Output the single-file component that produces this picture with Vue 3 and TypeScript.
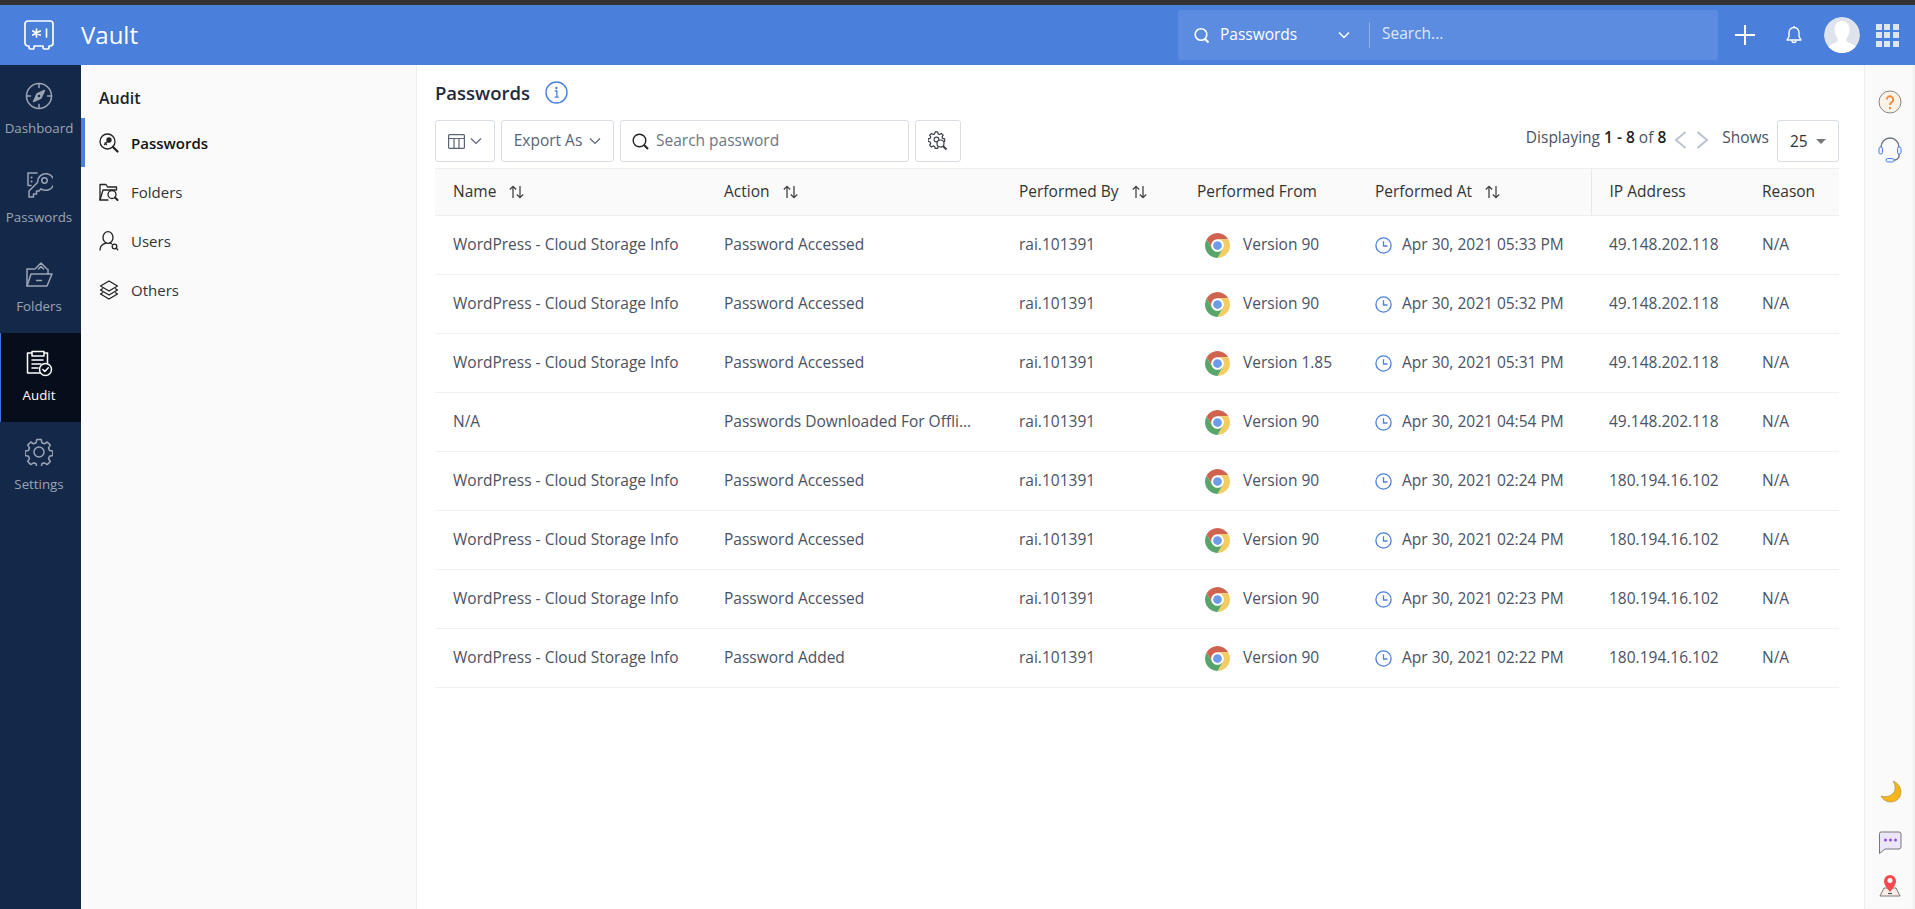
<script setup lang="ts">
interface Row { name: string; action: string; by: string; version: string; at: string; ip: string; reason: string }
const nav = ['Dashboard', 'Passwords', 'Folders', 'Audit', 'Settings']
const sub = ['Passwords', 'Folders', 'Users', 'Others']
const wp = 'WordPress - Cloud Storage Info'
const pa = 'Password Accessed'
const ip1 = '49.148.202.118'
const ip2 = '180.194.16.102'
const gear = 'M11.800 1.500h4.400l.7 3.300 2.500 1 2.800-1.800 3.100 3.100-1.800 2.800 1 2.500 3.300.7v4.400l-3.300.7-1 2.500 1.800 2.800-3.100 3.100-2.800-1.800-2.500 1-.7 3.300h-4.400l-.7-3.300-2.500-1-2.800 1.800-3.100-3.100 1.800-2.800-1-2.500-3.300-.7v-4.400l3.300-.7 1-2.500-1.800-2.800 3.100-3.100 2.800 1.800 2.500-1z'
const rows: Row[] = [
  { name: wp, action: pa, by: 'rai.101391', version: 'Version 90', at: 'Apr 30, 2021 05:33 PM', ip: ip1, reason: 'N/A' },
  { name: wp, action: pa, by: 'rai.101391', version: 'Version 90', at: 'Apr 30, 2021 05:32 PM', ip: ip1, reason: 'N/A' },
  { name: wp, action: pa, by: 'rai.101391', version: 'Version 1.85', at: 'Apr 30, 2021 05:31 PM', ip: ip1, reason: 'N/A' },
  { name: 'N/A', action: 'Passwords Downloaded For Offli...', by: 'rai.101391', version: 'Version 90', at: 'Apr 30, 2021 04:54 PM', ip: ip1, reason: 'N/A' },
  { name: wp, action: pa, by: 'rai.101391', version: 'Version 90', at: 'Apr 30, 2021 02:24 PM', ip: ip2, reason: 'N/A' },
  { name: wp, action: pa, by: 'rai.101391', version: 'Version 90', at: 'Apr 30, 2021 02:24 PM', ip: ip2, reason: 'N/A' },
  { name: wp, action: pa, by: 'rai.101391', version: 'Version 90', at: 'Apr 30, 2021 02:23 PM', ip: ip2, reason: 'N/A' },
  { name: wp, action: 'Password Added', by: 'rai.101391', version: 'Version 90', at: 'Apr 30, 2021 02:22 PM', ip: ip2, reason: 'N/A' },
]
const columns = [
  { label: 'Name', sort: true },
  { label: 'Action', sort: true },
  { label: 'Performed By', sort: true },
  { label: 'Performed From', sort: false },
  { label: 'Performed At', sort: true },
  { label: 'IP Address', sort: false },
  { label: 'Reason', sort: false },
]
</script>

<template>
  <div class="app">
    <div class="strip"></div>
    <header class="topbar">
      <div class="logo">
        <svg width="30" height="30" viewBox="0 0 30 30" fill="none" stroke="#fff" stroke-width="1.700" stroke-linecap="round" stroke-linejoin="round">
          <path d="M4 1h22a3 3 0 0 1 3 3v19a3 3 0 0 1-3 3h-1v1.500a1.500 1.500 0 0 1-1.500 1.500h-3a1.500 1.500 0 0 1-1.500-1.500V26h-9v1.500A1.500 1.500 0 0 1 9.500 29h-3A1.500 1.500 0 0 1 5 27.500V26H4a3 3 0 0 1-3-3V4a3 3 0 0 1 3-3z"/>
          <path d="M12.500 9v8M8.800 11l7.400 4M16.200 11l-7.400 4M22.500 9v8"/>
        </svg>
      </div>
      <div class="brand">Vault</div>
      <div class="topsearch">
        <svg class="ts-ico" width="16" height="17" viewBox="0 0 16 17" fill="none" stroke="#fff" stroke-width="1.600"><circle cx="7" cy="7.500" r="5.800"/><path d="M11 12l3.500 3.500" stroke-width="2.200"/></svg>
        <span class="ts-scope">Passwords</span>
        <svg class="ts-chev" width="12" height="8" viewBox="0 0 12 8" fill="none" stroke="#fff" stroke-width="1.500"><path d="M1 1.500l5 5 5-5"/></svg>
        <span class="ts-div"></span>
        <span class="ts-input">Search...</span>
      </div>
      <svg class="t-plus" width="20" height="20" viewBox="0 0 20 20" stroke="#fff" stroke-width="2"><path d="M10 0v20M0 10h20"/></svg>
      <svg class="t-bell" width="18" height="20" viewBox="0 0 18 20" fill="none" stroke="#fff" stroke-width="1.400" stroke-linejoin="round"><path d="M9 2.500c-3 0-5 2.300-5 5.200v3.800L2 15h14l-2-3.500V7.700c0-2.900-2-5.200-5-5.200z"/><path d="M9 1v1.500M7 15.500a2 2 0 0 0 4 0"/></svg>
      <div class="avatar">
        <svg width="36" height="36" viewBox="0 0 36 36"><circle cx="18" cy="18" r="18" fill="#dfe3ec"/><path d="M18 4c5 0 7.500 4 7.500 9 0 3.500-1.500 6.500-3 8.500-.8 2 0 3 2 4 4 1.500 7 3 8 5.500-3 3-8.500 5-14.500 5s-11.500-2-14.500-5c1-2.500 4-4 8-5.500 2-1 2.800-2 2-4-1.500-2-3-5-3-8.500 0-5 2.500-9 7.500-9z" fill="#fff"/></svg>
      </div>
      <div class="apps"><i v-for="n in 9" :key="n"></i></div>
    </header>

    <div class="body">
      <nav class="rail">
        <div v-for="(item, i) in nav" :key="item" class="rail-item" :class="{ active: item === 'Audit' }">
          <svg width="28" height="28" viewBox="0 0 28 28" fill="none" stroke="currentColor" stroke-width="1.500" stroke-linecap="round" stroke-linejoin="round">
            <template v-if="i === 0">
              <circle cx="14" cy="14" r="12.500"/>
              <path d="M14 1.500v4M14 22.500v4M1.500 14h4M22.500 14h4"/>
              <path d="M19.500 8.500l-3.500 7.500-7.500 3.500 3.500-7.500z" fill="currentColor"/>
              <circle cx="14" cy="14" r="1.300" fill="#14284a" stroke="none"/>
            </template>
            <template v-else-if="i === 1">
              <path d="M12 2H3v12.500h3"/>
              <path d="M6.500 6.500h.1M6.500 10.500h.1" stroke-width="2"/>
              <path d="M12.500 11.500L4 20v6h4.500v-3h3v-3H14l2-2.200A8.300 8.300 0 1 0 12.500 11.500z"/>
              <circle cx="19.500" cy="9.500" r="2.700"/>
            </template>
            <template v-else-if="i === 2">
              <path d="M2 26V9h7"/>
              <path d="M6 14h21l-5 12H2z"/>
              <path d="M11.500 20.500h5"/>
              <path d="M10 9l6-6 6 6M13.500 9l2.500-2.500L18.500 9"/>
              <path d="M23 9.500V14"/>
            </template>
            <template v-else-if="i === 3">
              <path d="M15 24H2.500V4H7M19 4h3.500v10M7 2.500h12V7H7z"/>
              <path d="M7 11h11M7 15h9M7 19h6"/>
              <circle cx="20.500" cy="20.500" r="6"/>
              <path d="M17.800 20.500l2 2 3.500-3.800"/>
            </template>
            <template v-else>
              <circle cx="14" cy="14" r="5"/>
              <path :d="gear"/>
            </template>
          </svg>
          <span>{{ item }}</span>
        </div>
      </nav>

      <aside class="subnav">
        <h3>Audit</h3>
        <div v-for="(item, i) in sub" :key="item" class="sub-item" :class="{ active: i === 0 }">
          <svg width="20" height="20" viewBox="0 0 20 20" fill="none" stroke="#222" stroke-width="1.300" stroke-linecap="round" stroke-linejoin="round">
            <template v-if="i === 0">
              <circle cx="8.500" cy="8.500" r="7.500"/>
              <path d="M14 14l4.500 4.500" stroke-width="2.200"/>
              <circle cx="10" cy="7" r="2" fill="#222"/>
              <path d="M9 8l-3.500 3.500M6 10l1.500 1.500"/>
            </template>
            <template v-else-if="i === 1">
              <path d="M1 18V2.500h6l1.500 2.500H17.500V8M1 18h8"/>
              <path d="M1 18l3-10h12.500"/>
              <circle cx="13" cy="12.500" r="4"/>
              <path d="M16 15.500l2.500 2.500" stroke-width="2"/>
            </template>
            <template v-else-if="i === 2">
              <ellipse cx="9" cy="6.500" rx="5" ry="5.800"/>
              <path d="M1 19c0-3.500 3-6 6-6.800M11 12.200c.5.100 1 .3 1.500.5"/>
              <circle cx="15.500" cy="15.500" r="2.300"/>
              <path d="M17.300 17.300l1.400 1.400"/>
            </template>
            <template v-else>
              <path d="M10 1l8.500 5-8.500 5-8.500-5z"/>
              <path d="M3.500 8.800l-2 1.200 8.500 5 8.500-5-2-1.200"/>
              <path d="M3.500 12.800l-2 1.200 8.500 5 8.500-5-2-1.200"/>
            </template>
          </svg>
          <span>{{ item }}</span>
        </div>
      </aside>

      <main class="main">
        <div class="title-row">
          <h2>Passwords</h2>
          <svg width="23" height="23" viewBox="0 0 23 23" fill="none"><circle cx="11.500" cy="11.500" r="10.500" stroke="#4a80dc" stroke-width="1.400"/><path d="M9.800 10h2.100v6M9.500 16.200h4.300" stroke="#4a80dc" stroke-width="1.300"/><circle cx="11.400" cy="7" r="1.200" fill="#4a80dc"/></svg>
        </div>

        <div class="toolbar">
          <button class="tbtn cols">
            <svg width="17" height="15" viewBox="0 0 17 15" fill="none" stroke="#5a6476" stroke-width="1.200"><rect x=".6" y=".6" width="15.800" height="13.800" rx="1"/><path d="M.6 4.500h15.800M6 4.500v9.900M11 4.500v9.900"/></svg>
            <svg width="12" height="8" viewBox="0 0 12 8" fill="none" stroke="#5a6476" stroke-width="1.200"><path d="M1 1.500l5 5 5-5"/></svg>
          </button>
          <button class="tbtn export">
            <span>Export As</span>
            <svg width="12" height="8" viewBox="0 0 12 8" fill="none" stroke="#5a6476" stroke-width="1.200"><path d="M1 1.500l5 5 5-5"/></svg>
          </button>
          <div class="tsearch">
            <svg width="17" height="17" viewBox="0 0 17 17" fill="none" stroke="#222" stroke-width="1.400"><circle cx="7.500" cy="7.500" r="6.300"/><path d="M12 12l4 4" stroke-width="2"/></svg>
            <span>Search password</span>
          </div>
          <button class="tbtn gear">
            <svg width="20" height="20" viewBox="0 0 20 20" fill="none" stroke="#3a3f4a" stroke-linejoin="round">
              <g transform="scale(.6)"><path :d="gear" stroke-width="2"/></g>
              <circle cx="8.500" cy="8.500" r="2.400" stroke-width="1.100"/>
              <circle cx="12.500" cy="12.500" r="3.500" fill="#fff" stroke-width="1.200"/>
              <path d="M15 15l3.500 3.500" stroke-width="2"/>
            </svg>
          </button>
          <div class="pager">
            <span class="disp">Displaying <b>1 - 8</b> of <b>8</b></span>
            <svg class="pg first" width="13" height="18" viewBox="0 0 13 18" fill="none" stroke="#bcc3ce" stroke-width="2"><path d="M11.500 1L2 9l9.500 8"/></svg>
            <svg class="pg" width="13" height="18" viewBox="0 0 13 18" fill="none" stroke="#bcc3ce" stroke-width="2"><path d="M1.500 1L11 9l-9.500 8"/></svg>
            <span class="shows">Shows</span>
            <div class="sel"><span>25</span><i></i></div>
          </div>
        </div>

        <table class="grid">
          <colgroup>
            <col class="c1" /><col class="c2" /><col class="c3" /><col class="c4" /><col class="c5" /><col class="c6" /><col class="c7" />
          </colgroup>
          <thead>
            <tr>
              <th v-for="c in columns" :key="c.label" :class="{ sep: c.label === 'IP Address' }">
                <span class="th-in">
                  <span class="th-t">{{ c.label }}</span>
                  <svg v-if="c.sort" width="17" height="14" viewBox="0 0 17 14" fill="none" stroke="#444" stroke-width="1.300"><path d="M5 13V1.500M1.800 4.500L5 1.300l3.200 3.200M12 1v11.500M8.800 9.500l3.200 3.200 3.200-3.200"/></svg>
                </span>
              </th>
            </tr>
          </thead>
          <tbody>
            <tr v-for="(r, i) in rows" :key="i">
              <td><span class="t">{{ r.name }}</span></td>
              <td><span class="t">{{ r.action }}</span></td>
              <td><span class="t">{{ r.by }}</span></td>
              <td>
                <div class="browser">
                  <svg width="25" height="25" viewBox="0 0 24 24">
                    <path fill="#d0634f" d="M22.390 6H12a6 6 0 0 0-5.200 9L1.610 6a12 12 0 0 1 20.780 0z"/>
                    <path fill="#f3cd62" transform="rotate(120 12 12)" d="M22.390 6H12a6 6 0 0 0-5.200 9L1.610 6a12 12 0 0 1 20.780 0z"/>
                    <path fill="#57a56b" transform="rotate(240 12 12)" d="M22.390 6H12a6 6 0 0 0-5.200 9L1.610 6a12 12 0 0 1 20.780 0z"/>
                    <circle cx="12" cy="12" r="5.300" fill="#fff"/>
                    <circle cx="12" cy="12" r="4.200" fill="#6d9ce8"/>
                  </svg>
                  <span class="t">{{ r.version }}</span>
                </div>
              </td>
              <td>
                <div class="when">
                  <svg width="17" height="17" viewBox="0 0 17 17" fill="none" stroke="#4a80dc" stroke-width="1.300"><circle cx="8.500" cy="8.500" r="7.600"/><path d="M8.500 4.200v4.800h4"/></svg>
                  <span class="t">{{ r.at }}</span>
                </div>
              </td>
              <td><span class="t">{{ r.ip }}</span></td>
              <td><span class="t">{{ r.reason }}</span></td>
            </tr>
          </tbody>
        </table>
      </main>

      <aside class="tools">
        <div class="tools-top">
          <svg width="24" height="24" viewBox="0 0 24 24" fill="none"><circle cx="12" cy="12" r="11" fill="#fdf3e6" stroke="#888" stroke-width="1"/><path d="M8.800 9.500a3.200 3.200 0 1 1 5 2.600c-1.200.8-1.800 1.400-1.800 2.900" stroke="#f58a3c" stroke-width="1.900" fill="none"/><circle cx="12" cy="18" r="1.200" fill="#f58a3c"/></svg>
          <svg width="24" height="26" viewBox="0 0 24 26" fill="none"><path d="M3 12V10a9 9 0 0 1 18 0v9c0 3-3 4-6 4.500" stroke="#6b7280" stroke-width="1.400"/><rect x="1" y="10" width="3.500" height="7" rx="1.500" fill="#eaf0fd" stroke="#4a80dc"/><rect x="19.500" y="10" width="3.500" height="7" rx="1.500" fill="#eaf0fd" stroke="#4a80dc"/><rect x="8" y="21.500" width="8" height="3.500" rx="1.700" fill="#eaf0fd" stroke="#4a80dc"/></svg>
        </div>
        <div class="tools-bottom">
          <svg class="moon" width="24" height="24" viewBox="0 0 24 24"><path d="M15 1c5 2 8 6 8 11 0 6-5 10-10 10-4 0-8-2-10-6 7 2 13-1 14-7 .3-3-.5-6-2-8z" fill="#f7b51c" stroke="#a68a45" stroke-width=".6"/></svg>
          <svg width="24" height="24" viewBox="0 0 24 24"><path d="M3 2h18a2 2 0 0 1 2 2v13a2 2 0 0 1-2 2H7l-5.500 4.500V3.500A1.500 1.500 0 0 1 3 2z" fill="#ece6fb" stroke="#777" stroke-width="1"/><circle cx="7.500" cy="10" r="1.500" fill="#8a4df0"/><circle cx="12.500" cy="10" r="1.500" fill="#8a4df0"/><circle cx="17.500" cy="10" r="1.500" fill="#8a4df0"/></svg>
          <svg width="24" height="24" viewBox="0 0 24 24"><path d="M6 15h12l4 8H2z" fill="#fbeeea" stroke="#777" stroke-width="1"/><path d="M12 19c-3-4-6-7-6-11a6 6 0 0 1 12 0c0 4-3 7-6 11z" fill="#f44a4f"/><circle cx="12" cy="7.500" r="2.500" fill="#fff"/><path d="M10 20.500h4" stroke="#555" stroke-width="1.200"/></svg>
        </div>
      </aside>
    </div>
  </div>
</template>

<style>
html, body { margin: 0; height: 100%; overflow: hidden; background: #fff; }
</style>

<style scoped>
.app { height: 909px; display: flex; flex-direction: column; font-family: "Open Sans", "Noto Sans", sans-serif; font-size: 15.500px; color: #4a5263; overflow: hidden; }
.strip { height: 5px; background: #333; flex: none; }
.topbar { height: 60px; flex: none; background: #4a80dc; display: flex; align-items: center; color: #fff; }
.logo { width: 78px; padding-right: 3px; display: flex; justify-content: center; height: 30px; }
.brand { font-size: 24px; line-height: 32px; }
.topsearch { margin-left: 1040px; width: 540px; height: 50px; background: #5c8ce0; border-radius: 3px; display: flex; align-items: center; font-size: 15.500px; }
.ts-ico { margin-left: 16px; }
.ts-scope { margin-left: 10px; width: 118px; padding-bottom: 2px; }
.ts-div { width: 1px; height: 26px; background: rgba(255,255,255,.3); margin-left: 19px; }
.ts-input { margin-left: 12px; color: #dfe8f8; padding-bottom: 4px; }
.t-plus { margin-left: 17px; }
.t-bell { margin-left: 30px; }
.avatar { margin-left: 21px; width: 36px; height: 36px; border-radius: 50%; overflow: hidden; }
.apps { margin-left: 16px; width: 23px; height: 23px; display: grid; grid-template-columns: repeat(3, 6px); grid-auto-rows: 6px; gap: 2.500px; }
.apps i { background: #e0e4ee; }
.body { flex: 1; display: flex; min-height: 0; }
.rail { width: 81px; flex: none; background: #14284a; padding-top: 1px; box-sizing: border-box; }
.rail-item { height: 89px; box-sizing: border-box; padding: 16px 3px 0 0; display: flex; flex-direction: column; align-items: center; color: #9ba5b4; font-size: 13.300px; line-height: 18px; white-space: nowrap; }
.rail-item span { margin-top: 9px; }
.rail-item.active { background: #070e1b; color: #fff; box-shadow: inset 1px 0 0 #3b74d8; }
.subnav { width: 335px; flex: none; background: #fafafa; border-right: 1px solid #eeeef2; }
.subnav h3 { margin: 0; padding: 22px 0 0 18px; font-size: 16px; font-weight: 600; color: #222; line-height: 22px; height: 31px; }
.sub-item { height: 49px; display: flex; align-items: center; border-left: 4px solid transparent; padding-left: 14px; gap: 12px; font-size: 15px; color: #333; box-sizing: border-box; }
.sub-item.active { border-left-color: #4a80dc; color: #111; font-weight: 600; }
.main { flex: 1; padding: 0 25px 0 18px; min-width: 0; background: #fff; }
.title-row { height: 55px; display: flex; align-items: center; gap: 15px; }
.title-row h2 { margin: 0; font-size: 18.500px; font-weight: 600; color: #1f2a3c; }
.toolbar { height: 42px; margin-bottom: 6px; display: flex; gap: 6px; }
.tbtn { height: 42px; background: #fff; border: 1px solid #d9dde4; border-radius: 3px; box-sizing: border-box; display: flex; align-items: center; justify-content: center; padding: 0; font-family: inherit; font-size: 15.500px; color: #5a6476; }
.tbtn > span { padding-bottom: 3px; }
.cols { width: 60px; gap: 5px; }
.export { width: 113px; gap: 7px; }
.gear { width: 46px; }
.tsearch { width: 289px; height: 42px; border: 1px solid #d9dde4; border-radius: 3px; box-sizing: border-box; display: flex; align-items: center; padding-left: 11px; gap: 7px; font-size: 15.500px; color: #6d7584; }
.tsearch span { padding-bottom: 2px; }
.pager { margin-left: auto; display: flex; align-items: flex-start; }
.disp { margin-top: 6px; color: #4a5263; white-space: nowrap; line-height: 22px; }
.disp b { font-weight: 600; color: #222; }
.pg { margin-top: 11px; margin-left: 9px; }
.pg.first { margin-left: 8px; }
.shows { margin-top: 6px; margin-left: 13px; line-height: 22px; }
.sel { margin-left: 8px; width: 62px; height: 42px; box-sizing: border-box; border: 1px solid #d9dde4; border-radius: 3px; display: flex; align-items: center; padding-left: 12px; gap: 8px; font-size: 15.500px; color: #333; }
.sel i { width: 0; height: 0; border-left: 5px solid transparent; border-right: 5px solid transparent; border-top: 5px solid #777; }
.grid { width: 1404px; border-collapse: collapse; table-layout: fixed; }
.c1 { width: 271px; } .c2 { width: 295px; } .c3 { width: 178px; } .c4 { width: 178px; } .c5 { width: 234px; } .c6 { width: 153px; } .c7 { width: 95px; }
.grid th { height: 47px; background: #fafafa; border-top: 1px solid #eeeef0; border-bottom: 1px solid #eeeef0; text-align: left; font-weight: 500; color: #333; padding: 0 0 0 18px; font-size: 15.500px; box-sizing: border-box; }
.grid th.sep { border-left: 1px solid #e8e8ec; }
.th-in { display: inline-flex; align-items: center; gap: 12px; }
.th-t { padding-bottom: 2px; }
.grid td { height: 59px; box-sizing: border-box; border-bottom: 1px solid #f0f0f3; padding: 0 0 0 18px; white-space: nowrap; color: #4a5263; font-size: 15.500px; }
.t { display: inline-block; padding-bottom: 2px; }
.browser { display: flex; align-items: center; gap: 13px; margin-left: 8px; }
.when { display: flex; align-items: center; gap: 10px; }
.tools { width: 51px; flex: none; background: #fafafa; border-left: 1px solid #eeeef2; display: flex; flex-direction: column; align-items: center; justify-content: space-between; padding: 25px 0 12px; box-sizing: border-box; box-shadow: inset -3px 0 3px -2px #e6e6e6; }
.tools-top { display: flex; flex-direction: column; align-items: center; gap: 23px; }
.tools-bottom { display: flex; flex-direction: column; align-items: center; gap: 19px; }
.moon { margin-bottom: 7px; }
</style>
